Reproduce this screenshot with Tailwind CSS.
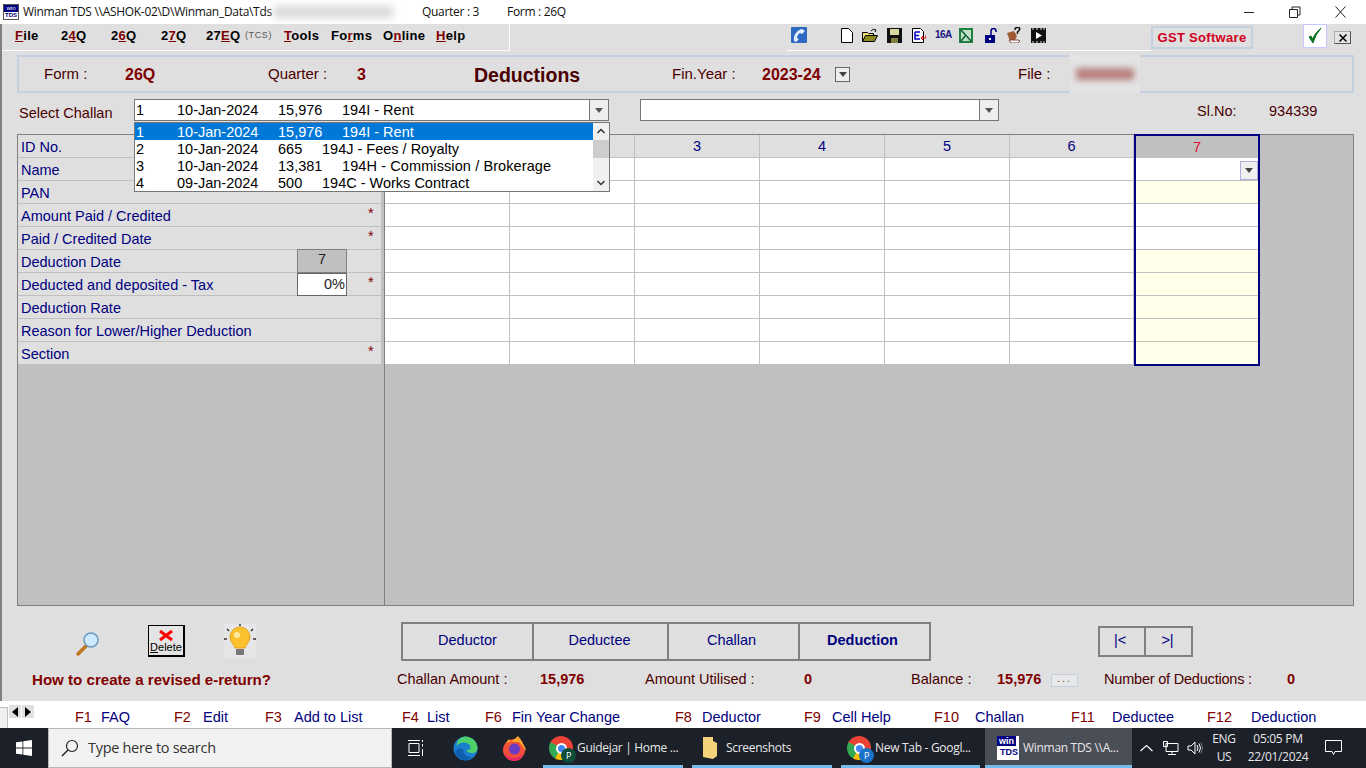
<!DOCTYPE html>
<html lang="en">
<head>
    <meta charset="UTF-8" />
    <title>Winman TDS</title>
    <script src="https://cdn.jsdelivr.net/npm/@tailwindcss/browser@4"></script>
</head>
<body class="w-[1366px] h-[768px] overflow-hidden bg-[#dfdfdf] flex flex-col font-['Liberation_Sans',sans-serif] text-[14.5px] text-[#4a0000]">

    <!-- title bar -->
    <header class="h-6 shrink-0 bg-white flex items-center text-[12px] tracking-[-.3px] text-[#111] font-['Open_Sans',sans-serif]">
        <div class="ml-[3px] w-4 h-4 border border-[#555] flex flex-col items-center leading-none text-[6px] tracking-normal font-['Liberation_Sans',sans-serif]">
            <span class="w-full bg-[#000080] text-white text-center h-[7px]">win</span>
            <span class="text-[#000080] font-bold">TDS</span>
        </div>
        <span class="ml-1 w-[250px] whitespace-nowrap">Winman TDS \\ASHOK-02\D\Winman_Data\Tds</span>
        <span class="w-[120px] h-3 bg-[#d8d8d8] blur-[4px]"></span>
        <span class="ml-[29px] w-[85px]">Quarter : 3</span>
        <span>Form : 26Q</span>
        <div class="ml-auto mr-[20px] flex items-center">
            <svg class="w-[45px] h-3" viewBox="0 0 45 12"><path d="M0 6.500h10" stroke="#222" fill="none"/></svg>
            <svg class="w-[46px] h-3" viewBox="0 0 46 12"><path d="M.5 3.500h8v8h-8zM3 3V1h8v8H9" stroke="#222" fill="none"/></svg>
            <svg class="w-[11px] h-3" viewBox="0 0 11 12"><path d="M.5.500l10 11M10.500.500l-10 11" stroke="#222" fill="none"/></svg>
        </div>
    </header>

    <div class="h-[677px] shrink-0 border-l-2 border-[#808080] flex flex-col">
        <!-- menu and toolbar -->
        <div class="h-[31px] shrink-0 flex">
            <nav class="w-[508px] h-[27px] border-b border-r border-white flex items-center font-bold text-[13px] tracking-[.3px] text-black pb-[2px] whitespace-nowrap">
                <span class="ml-[13px] w-[46px]"><u class="text-[#800000]">F</u>ile</span>
                <span class="w-[50px]">2<u class="text-[#800000]">4</u>Q</span>
                <span class="w-[50px]">2<u class="text-[#800000]">6</u>Q</span>
                <span class="w-[45px]">2<u class="text-[#800000]">7</u>Q</span>
                <span class="w-[39px]">27<u class="text-[#800000]">E</u>Q</span>
                <span class="w-[39px] font-normal text-[9px] tracking-[.6px] text-[#555]">(TCS)</span>
                <span class="w-[47px]"><u class="text-[#800000]">T</u>ools</span>
                <span class="w-[52px]">Fo<u class="text-[#800000]">r</u>ms</span>
                <span class="w-[53px]">O<u class="text-[#800000]">n</u>line</span>
                <span><u class="text-[#800000]">H</u>elp</span>
            </nav>
            <div class="ml-[277px] w-[364px] h-[27px] border-b border-white flex items-center pl-[4px] pb-[4px]">
                <svg class="w-4 h-4" viewBox="0 0 16 16"><rect width="16" height="16" rx="1" fill="#2f68c0"/><path d="M3 14C2 8 6 3 11 2l3 2-3 3-2-1C7 7 6 9 6 11l2 1-3 3z" fill="#e4eeff"/></svg>
                <svg class="ml-[34px] w-3 h-[15px]" viewBox="0 0 12 15"><path d="M.5.500h7l4 4v10H.5z" fill="#fff" stroke="#000"/></svg>
                <svg class="ml-[9px] w-4 h-[15px]" viewBox="0 0 16 15"><path d="M.5 13.500v-9h5l1 1h5v2" fill="#f0e080" stroke="#000"/><path d="M.5 13.500l3-6h12l-3 6z" fill="#8a8a20" stroke="#000"/><path d="M9 3q2-3 5-1l-1 2" stroke="#000" fill="none"/></svg>
                <svg class="ml-[9px] w-[15px] h-[15px]" viewBox="0 0 15 15"><rect width="15" height="15" fill="#111"/><rect x="3" y="1" width="9" height="6" fill="#d8d8a0"/><rect x="4" y="10" width="7" height="5" fill="#808040"/></svg>
                <svg class="ml-[10px] w-[14px] h-[15px]" viewBox="0 0 14 15"><path d="M.5.500h8l3 3v11H.5z" fill="#fff" stroke="#000"/><path d="M3 4h5M3 4v7h5M3 7.500h4" stroke="#00c" stroke-width="1.500" fill="none"/><path d="M14 7v3H9m2-2l-2 2 2 2" stroke="#e00" fill="none"/></svg>
                <span class="ml-[9px] w-[14px] text-[10px] leading-none font-bold text-[#1a1a80] tracking-[-.5px] whitespace-nowrap">16A</span>
                <svg class="ml-[10px] w-[14px] h-[15px]" viewBox="0 0 14 15"><rect width="14" height="15" fill="#208040"/><rect x="2" y="2" width="10" height="11" fill="#c0e0c8"/><path d="M2 2l10 11M2 13L7 7" stroke="#106030" stroke-width="1.500"/></svg>
                <svg class="ml-[12px] w-3 h-[15px]" viewBox="0 0 12 15"><rect y="7" width="10" height="8" fill="#000080"/><rect x="4" y="10" width="2" height="2" fill="#fff"/><path d="M6 7V3a2.500 2.500 0 0 1 5 0v1" stroke="#000080" stroke-width="1.500" fill="none"/></svg>
                <svg class="ml-[9px] w-4 h-4" viewBox="0 0 16 16"><path d="M1 6l7-2 3 5-2 4-5 1z" fill="#a05830"/><path d="M3 13h9l2 1-2 2H5z" fill="#fff" stroke="#844"/><path d="M9 3q0-3 3-2.500t1 3l-1.500 1.500v2" stroke="#111" stroke-width="1.500" fill="none"/></svg>
                <svg class="ml-[9px] w-[15px] h-[15px]" viewBox="0 0 15 15"><rect width="15" height="15" fill="#111"/><path d="M1 1h2M5 1h2M9 1h2M12 1h2M1 14h2M5 14h2M9 14h2M12 14h2" stroke="#ddd"/><path d="M5 4l6 3.500L5 11z" fill="#fff"/></svg>
            </div>
            <div class="mt-[2px] w-[102px] h-[23px] border-2 border-[#c2d0e0] flex items-center justify-center font-bold text-[13px] tracking-[.3px] text-[#d00020]">GST Software</div>
            <div class="ml-[50px] w-[24px] h-[24px] bg-white border border-[#c8c8ff] flex items-center justify-center">
                <svg class="w-4 h-[18px]" viewBox="0 0 16 18"><path d="M2 10l4 6Q8 8 14 1Q8 6 5.500 12L4 9z" fill="#0a7020" stroke="#0a7020"/></svg>
            </div>
            <div class="ml-[7px] mt-[7px] w-[17px] h-[13px] bg-[#e4e4e4] border border-[#aaa] border-r-[#555] border-b-[#555] flex items-center justify-center">
                <svg class="w-2 h-2" viewBox="0 0 8 8"><path d="M.5.500l7 7M7.500.500l-7 7" stroke="#000" stroke-width="1.500"/></svg>
            </div>
        </div>

        <!-- form header -->
        <section class="ml-[15px] w-[1337px] h-[38px] shrink-0 border-2 border-[#c2d0e0] flex items-center pl-[25px] text-[15px]">
            <span class="w-[81px] pt-[1px]">Form :</span>
            <b class="w-[143px] text-[16px] text-[#800000] pt-[1px]">26Q</b>
            <span class="w-[89px] pt-[1px]">Quarter :</span>
            <b class="w-[117px] text-[16px] text-[#800000] pt-[1px]">3</b>
            <b class="w-[198px] text-[19.500px] text-[#4a0000] pt-[3px]">Deductions</b>
            <span class="w-[90px] pt-[1px]">Fin.Year :</span>
            <b class="w-[73px] text-[16px] text-[#800000] pt-[1px]">2023-24</b>
            <span class="w-[183px]"><span class="w-[15px] h-[15px] border border-[#666] bg-[#eee] flex items-center justify-center"><span class="border-x-[4px] border-x-transparent border-t-[5px] border-t-[#444]"></span></span></span>
            <span class="w-[52px] pt-[1px]">File :</span>
            <span class="w-[70px] h-[38px] bg-[#e4e4e4] flex items-center justify-center"><span class="w-[58px] h-[12px] bg-[#b88080] blur-[3px]"></span></span>
        </section>

        <!-- challan row -->
        <div class="mt-[6px] h-[22px] shrink-0 flex items-center relative">
            <span class="ml-[17px] w-[115px] pt-[8px]">Select Challan</span>
            <div class="w-[475px] h-[22px] bg-white border border-[#777] flex items-center">
                <span class="flex-1 pl-[1px] pt-[2px] flex text-black"><span class="w-[41px]">1</span><span class="w-[101px]">10-Jan-2024</span><span class="w-[64px]">15,976</span><span>194I - Rent</span></span>
                <span class="w-[19px] h-full border-l border-[#777] bg-[#eee] flex items-center justify-center"><span class="border-x-[4px] border-x-transparent border-t-[5px] border-t-[#555]"></span></span>
            </div>
            <div class="ml-[31px] w-[359px] h-[22px] bg-white border border-[#777] flex justify-end">
                <span class="w-[19px] h-full border-l border-[#777] bg-[#eee] flex items-center justify-center"><span class="border-x-[4px] border-x-transparent border-t-[5px] border-t-[#555]"></span></span>
            </div>
            <span class="ml-[198px] w-[72px] pt-[4px]">Sl.No:</span>
            <span class="pt-[4px]">934339</span>

            <!-- open challan list -->
            <div class="absolute z-10 left-[132px] top-[23px] w-[476px] h-[70px] bg-white border border-[#777] flex text-black leading-[19px]">
                <div class="flex-1">
                    <div class="h-[17px] pl-[1px] flex bg-[#0078d7] text-white"><span class="w-[41px]">1</span><span class="w-[101px]">10-Jan-2024</span><span class="w-[64px]">15,976</span><span>194I - Rent</span></div>
                    <div class="h-[17px] pl-[1px] flex"><span class="w-[41px]">2</span><span class="w-[101px]">10-Jan-2024</span><span class="w-[44px]">665</span><span>194J - Fees / Royalty</span></div>
                    <div class="h-[17px] pl-[1px] flex"><span class="w-[41px]">3</span><span class="w-[101px]">10-Jan-2024</span><span class="w-[64px]">13,381</span><span class="tracking-[.1px]">194H - Commission / Brokerage</span></div>
                    <div class="h-[17px] pl-[1px] flex"><span class="w-[41px]">4</span><span class="w-[101px]">09-Jan-2024</span><span class="w-[44px]">500</span><span>194C - Works Contract</span></div>
                </div>
                <div class="w-[16px] bg-[#f0f0f0] flex flex-col items-center justify-between">
                    <svg class="w-full h-[17px]" viewBox="0 0 16 17"><path d="M4.500 10L8 6.500l3.500 3.500" stroke="#333" stroke-width="1.500" fill="none"/></svg>
                    <div class="w-full h-[18px] bg-[#cdcdcd] mb-auto"></div>
                    <svg class="w-full h-[17px]" viewBox="0 0 16 17"><path d="M4.500 7L8 10.500 11.500 7" stroke="#333" stroke-width="1.500" fill="none"/></svg>
                </div>
            </div>
        </div>

        <!-- deduction grid -->
        <main class="ml-[15px] mt-[13px] w-[1337px] h-[472px] shrink-0 border border-[#808080] bg-[#c0c0c0] flex">
            <div class="w-[367px] h-full border-r border-[#808080] pr-[3px]">
                <div id="labels" class="relative bg-[#dfdfdf] text-[#000080]"></div>
            </div>
            <div id="columns" class="flex items-start"></div>
        </main>

        <!-- lower buttons and totals -->
        <div class="mt-[15px] h-[40px] shrink-0 flex items-center">
            <svg class="ml-[73px] w-[26px] h-[26px] mt-[5px]" viewBox="0 0 26 26"><path d="M3 23l8-8" stroke="#c07820" stroke-width="3.500" stroke-linecap="round"/><circle cx="16" cy="9" r="7" fill="#cfeaff" stroke="#6a9ac0" stroke-width="1.500"/></svg>
            <div class="ml-[47px] w-[37px] h-[32px] border border-black border-r-2 border-b-2 bg-[#e4e4e4] flex flex-col items-center text-[11px] text-black leading-[12px]">
                <svg class="w-[14px] h-[11px] mt-[4px]" viewBox="0 0 14 11"><path d="M1 1l12 9M13 1L1 10" stroke="#f00" stroke-width="3"/></svg>
                <span><u>D</u>elete</span>
            </div>
            <svg class="ml-[39px] w-[32px] h-[34px]" viewBox="0 0 32 34"><rect width="32" height="34" fill="#e6e6e6"/><path d="M11 24c-1-4-5-6-5-11a10 10 0 0 1 20 0c0 5-4 7-5 11z" fill="#fbc02d" stroke="#e8a020"/><circle cx="13" cy="11" r="3" fill="#ffe9a0"/><rect x="12" y="25" width="8" height="6" rx="1" fill="#777"/><path d="M16 0v2M3 5l2 2M29 5l-2 2M0 15h3M29 15h3" stroke="#333" stroke-width="1.500"/></svg>
            <nav class="ml-[145px] w-[530px] h-[39px] border-2 border-[#808080] flex text-[#000080] items-stretch">
                <span class="w-[131px] border-r-2 border-[#808080] flex items-center justify-center">Deductor</span>
                <span class="w-[135px] border-r-2 border-[#808080] flex items-center justify-center pr-[2px]">Deductee</span>
                <span class="w-[131px] border-r-2 border-[#808080] flex items-center justify-center pr-[4px]">Challan</span>
                <b class="flex-1 flex items-center justify-center pr-[4px]">Deduction</b>
            </nav>
            <nav class="ml-[167px] w-[95px] h-[31px] border-2 border-[#808080] flex text-[#000080] items-stretch">
                <span class="w-[46px] border-r-2 border-[#808080] flex items-center justify-center pr-[4px]">|&lt;</span>
                <span class="flex-1 flex items-center justify-center pr-[2px]">&gt;|</span>
            </nav>
        </div>
        <div class="mt-[9px] h-[20px] shrink-0 flex items-center">
            <b class="ml-[30px] w-[365px] text-[15.100px] text-[#800000]">How to create a revised e-return?</b>
            <span class="w-[143px]">Challan Amount :</span>
            <b class="w-[105px] text-[#800000]">15,976</b>
            <span class="w-[159px]">Amount Utilised :</span>
            <b class="w-[107px] text-[#800000]">0</b>
            <span class="w-[86px]">Balance :</span>
            <b class="w-[54px] text-[#800000]">15,976</b>
            <span class="w-[27px] h-[13px] border border-[#c2d0e0] bg-[#e8e8e8] text-[11px] leading-[7px] text-center tracking-[2px] text-[#555]">...</span>
            <span class="ml-[26px] w-[183px] tracking-[-.2px]">Number of Deductions :</span>
            <b class="text-[#800000]">0</b>
        </div>
    </div>

    <!-- function keys -->
    <footer class="h-[27px] shrink-0 bg-white relative flex items-center pt-[6px] text-[#000080] whitespace-nowrap">
        <span class="absolute left-0 top-[6px] w-[8px] h-[21px] bg-[#f0f0f0] border-t border-r border-[#c0c0c0]"></span>
        <div class="absolute left-[9px] top-[4px] flex gap-px">
            <span class="w-[12px] h-[13px] bg-[#e0e0e0] flex items-center justify-center"><span class="border-y-[5px] border-y-transparent border-r-[6px] border-r-black"></span></span>
            <span class="w-[12px] h-[13px] bg-[#e0e0e0] flex items-center justify-center"><span class="border-y-[5px] border-y-transparent border-l-[6px] border-l-black"></span></span>
        </div>
        <span class="ml-[75px] w-[26px] text-[#800000]">F1</span><span class="w-[73px]">FAQ</span>
        <span class="w-[29px] text-[#800000]">F2</span><span class="w-[62px]">Edit</span>
        <span class="w-[29px] text-[#800000]">F3</span><span class="w-[108px]">Add to List</span>
        <span class="w-[25px] text-[#800000]">F4</span><span class="w-[58px]">List</span>
        <span class="w-[27px] text-[#800000]">F6</span><span class="w-[163px]">Fin Year Change</span>
        <span class="w-[27px] text-[#800000]">F8</span><span class="w-[102px]">Deductor</span>
        <span class="w-[28px] text-[#800000]">F9</span><span class="w-[102px]">Cell Help</span>
        <span class="w-[41px] text-[#800000]">F10</span><span class="w-[96px]">Challan</span>
        <span class="w-[41px] text-[#800000]">F11</span><span class="w-[95px]">Deductee</span>
        <span class="w-[44px] text-[#800000]">F12</span><span>Deduction</span>
    </footer>

    <!-- windows taskbar -->
    <div class="h-10 shrink-0 bg-[#1c2028] flex items-stretch text-[12px] tracking-[-.3px] text-[#e8e8e8] font-['Open_Sans',sans-serif] whitespace-nowrap">
        <div class="w-[48px] flex items-center justify-center">
            <svg class="w-4 h-4" viewBox="0 0 16 16"><path d="M0 2.300l6.500-.9v6.200H0zM7.300 1.300L16 0v7.600H7.300zM0 8.400h6.500v6.200L0 13.700zM7.300 8.400H16V16l-8.700-1.200z" fill="#fff"/></svg>
        </div>
        <div class="w-[344px] bg-[#f2f2f2] border border-[#b8b8b8] flex items-center text-[14.500px] text-[#333]">
            <svg class="ml-[12px] w-[18px] h-[18px]" viewBox="0 0 18 18"><circle cx="11" cy="7" r="5.500" fill="none" stroke="#222" stroke-width="1.200"/><path d="M7 11l-6 6" stroke="#222" stroke-width="1.400"/></svg>
            <span class="ml-[9px]">Type here to search</span>
        </div>
        <div class="w-[52px] flex items-center">
            <svg class="ml-[16px] w-[16px] h-[16px]" viewBox="0 0 16 16"><path d="M1 3.500h10v9H1zM0 .500h12M0 15.500h12M14.500 0v2M14.500 4v2.500M14.500 9v7" stroke="#fff" fill="none"/></svg>
        </div>
        <div class="w-[46px] flex items-center">
            <svg class="ml-[9px] w-[25px] h-[25px]" viewBox="0 0 25 25"><circle cx="12.500" cy="12.500" r="12" fill="#1b7fd0"/><path d="M12 .500C19 .500 24.500 6 24.500 12c0 3-2 5-5 5-3 0-6-1-6-3 4 0 5-2 3-5-2-3-9-4-13 1C4 4 8 .500 12 .500z" fill="#4fd06a"/><path d="M10 13c0 5 4 9 10 8-2 2-5 3-8 3-5 0-9-4-10-8 1-3 5-5 8-3z" fill="#0f5fb0"/></svg>
        </div>
        <div class="w-[53px] flex items-center">
            <svg class="ml-[12px] w-[24px] h-[25px]" viewBox="0 0 24 25"><circle cx="12" cy="14" r="11" fill="#f0503a"/><path d="M4 7L7 3l2 3 7-6q5 6 5 8 3 4 3 7L17 6H8z" fill="#ffa52e"/><circle cx="12.500" cy="13" r="5.500" fill="#6a3bc0"/><path d="M2 17q10 10 20 0-4 8-10 8t-10-8z" fill="#e8246a"/></svg>
        </div>
        <div class="w-[140px] relative flex items-center">
            <span class="absolute left-0 right-0 bottom-0 h-[3px] bg-[#76b9ed]"></span>
            <span class="ml-[6px] w-[24px] h-[24px] rounded-full bg-[conic-gradient(#ea4335_0_120deg,#fbbc04_120deg_210deg,#34a853_210deg_300deg,#ea4335_300deg)] flex items-center justify-center relative">
                <span class="w-[11px] h-[11px] rounded-full bg-[#4285f4] border-2 border-white"></span>
                <span class="absolute -right-[3px] -bottom-[3px] w-[15px] h-[15px] rounded-full bg-[#0f4c3a] text-white text-[9px] leading-[15px] text-center">P</span>
            </span>
            <span class="ml-[4px]">Guidejar | Home ...</span>
        </div>
        <div class="ml-[9px] w-[140px] relative flex items-center">
            <span class="absolute left-0 right-0 bottom-0 h-[3px] bg-[#76b9ed]"></span>
            <svg class="ml-[10px] w-[16px] h-[24px]" viewBox="0 0 16 24"><path d="M1 1h10v4l4 2v13l-4 3-10-2z" fill="#f4d27a"/></svg>
            <span class="ml-[8px]">Screenshots</span>
        </div>
        <div class="ml-[9px] w-[139px] relative flex items-center">
            <span class="absolute left-0 right-0 bottom-0 h-[3px] bg-[#76b9ed]"></span>
            <span class="ml-[6px] w-[24px] h-[24px] shrink-0 rounded-full bg-[conic-gradient(#ea4335_0_120deg,#fbbc04_120deg_210deg,#34a853_210deg_300deg,#ea4335_300deg)] flex items-center justify-center relative">
                <span class="w-[11px] h-[11px] rounded-full bg-[#4285f4] border-2 border-white"></span>
                <span class="absolute -right-[3px] -bottom-[3px] w-[15px] h-[15px] rounded-full bg-[#1a73c8] text-white text-[9px] leading-[15px] text-center">P</span>
            </span>
            <span class="ml-[4px]">New Tab - Googl...</span>
        </div>
        <div class="ml-[5px] w-[147px] relative bg-[#4a4e57] flex items-center">
            <span class="absolute left-0 right-0 bottom-0 h-[3px] bg-[#76b9ed]"></span>
            <span class="ml-[12px] w-[22px] h-[24px] bg-white flex flex-col text-[9px] leading-[10px] tracking-normal font-['Liberation_Sans',sans-serif] font-bold">
                <span class="w-[19px] h-[10px] bg-[#000080] text-white text-center">win</span>
                <span class="pl-[3px] pt-[1px] text-[#000080]">TDS</span>
            </span>
            <span class="ml-[4px]">Winman TDS \\A...</span>
        </div>
        <div class="flex-1 flex items-center">
            <svg class="ml-[8px] w-[13px] h-[8px]" viewBox="0 0 13 8"><path d="M.5 7L6.500 1.500 12.500 7" stroke="#fff" stroke-width="1.200" fill="none"/></svg>
            <svg class="ml-[10px] w-[16px] h-[14px]" viewBox="0 0 16 14"><path d="M3 2.500h12v8H3zM.5.500h4v5h-4zM9 10.500v3M5 13.500h8" stroke="#fff" fill="#1c2028"/></svg>
            <svg class="ml-[8px] w-[16px] h-[14px]" viewBox="0 0 16 14"><path d="M1 5h3l4-4v12L4 9H1zM10 4q2 3 0 6M12 2.500q3 4.500 0 9" stroke="#fff" fill="none"/><path d="M14 1.500q3 5.500 0 11" stroke="#777" fill="none"/></svg>
            <div class="ml-[8px] w-[26px] flex flex-col items-center leading-[18px]"><span>ENG</span><span>US</span></div>
            <div class="ml-[11px] w-[60px] flex flex-col items-center leading-[18px]"><span>05:05 PM</span><span>22/01/2024</span></div>
            <svg class="ml-[17px] w-[17px] h-[16px]" viewBox="0 0 17 16"><path d="M.5.500h16v11H10l-1.500 3-1.500-3H.5z" stroke="#fff" fill="none"/></svg>
        </div>
    </div>

    <script>
        const labels = ['ID No.', 'Name', 'PAN', 'Amount Paid / Credited', 'Paid / Credited Date', 'Deduction Date', 'Deducted and deposited - Tax', 'Deduction Rate', 'Reason for Lower/Higher Deduction', 'Section'];
        const starred = [3, 4, 6, 9];
        const yellow = [1, 4, 5, 6, 7, 8];

        let left = '';
        labels.forEach((text, i) => {
            left += '<div class="h-[23px] border-b border-[#c0c0c0] pl-[3px] flex items-center pt-[4px] relative">' + text;
            if (starred.includes(i)) left += '<span class="absolute left-[350px] -top-px text-[#800000]">*</span>';
            left += '</div>';
        });
        left += '<div class="absolute left-[279px] top-[114px] w-[50px] h-[24px] bg-[#c0c0c0] border border-[#808080] text-center text-[#222] leading-[18px]">7</div>';
        left += '<div class="absolute left-[279px] top-[138px] w-[50px] h-[23px] bg-white border border-[#666] text-right pr-[1px] text-[#222] leading-[20px]">0%</div>';
        document.getElementById('labels').innerHTML = left;

        let cols = '';
        for (let c = 1; c <= 6; c++) {
            const width = c === 6 ? 'w-[124px]' : 'w-[125px]';
            // headers 1 and 2 sit under the open challan list
            const title = c > 2 ? c : '';
            cols += '<div class="' + width + ' shrink-0 bg-white border-r border-[#c0c0c0]">';
            cols += '<div class="h-[23px] bg-[#dfdfdf] border-b border-[#c0c0c0] flex items-center justify-center pt-[2px] text-[#000080]">' + title + '</div>';
            for (let r = 0; r < 9; r++) cols += '<div class="h-[23px] border-b border-[#c0c0c0]"></div>';
            cols += '</div>';
        }
        cols += '<div class="w-[126px] shrink-0 -mt-px bg-white border-2 border-[#000080]">';
        cols += '<div class="h-[22px] bg-[#c0c0c0] flex items-center justify-center pt-[2px] text-[#e01030]">7</div>';
        for (let r = 0; r < 9; r++) {
            const bg = yellow.includes(r) ? 'bg-[#ffffea]' : 'bg-white';
            const row = r === 8 ? 'h-[22px]' : 'h-[23px] border-b border-[#c0c0c0]';
            cols += '<div class="relative ' + bg + ' ' + row + '">';
            if (r === 0) cols += '<span class="absolute right-0 top-[3px] w-[18px] h-[19px] bg-[#f0f0f0] border border-[#b0b0e0] flex items-center justify-center"><span class="border-x-[4px] border-x-transparent border-t-[5px] border-t-[#444]"></span></span>';
            cols += '</div>';
        }
        cols += '</div>';
        document.getElementById('columns').innerHTML = cols;
    </script>
</body>
</html>
